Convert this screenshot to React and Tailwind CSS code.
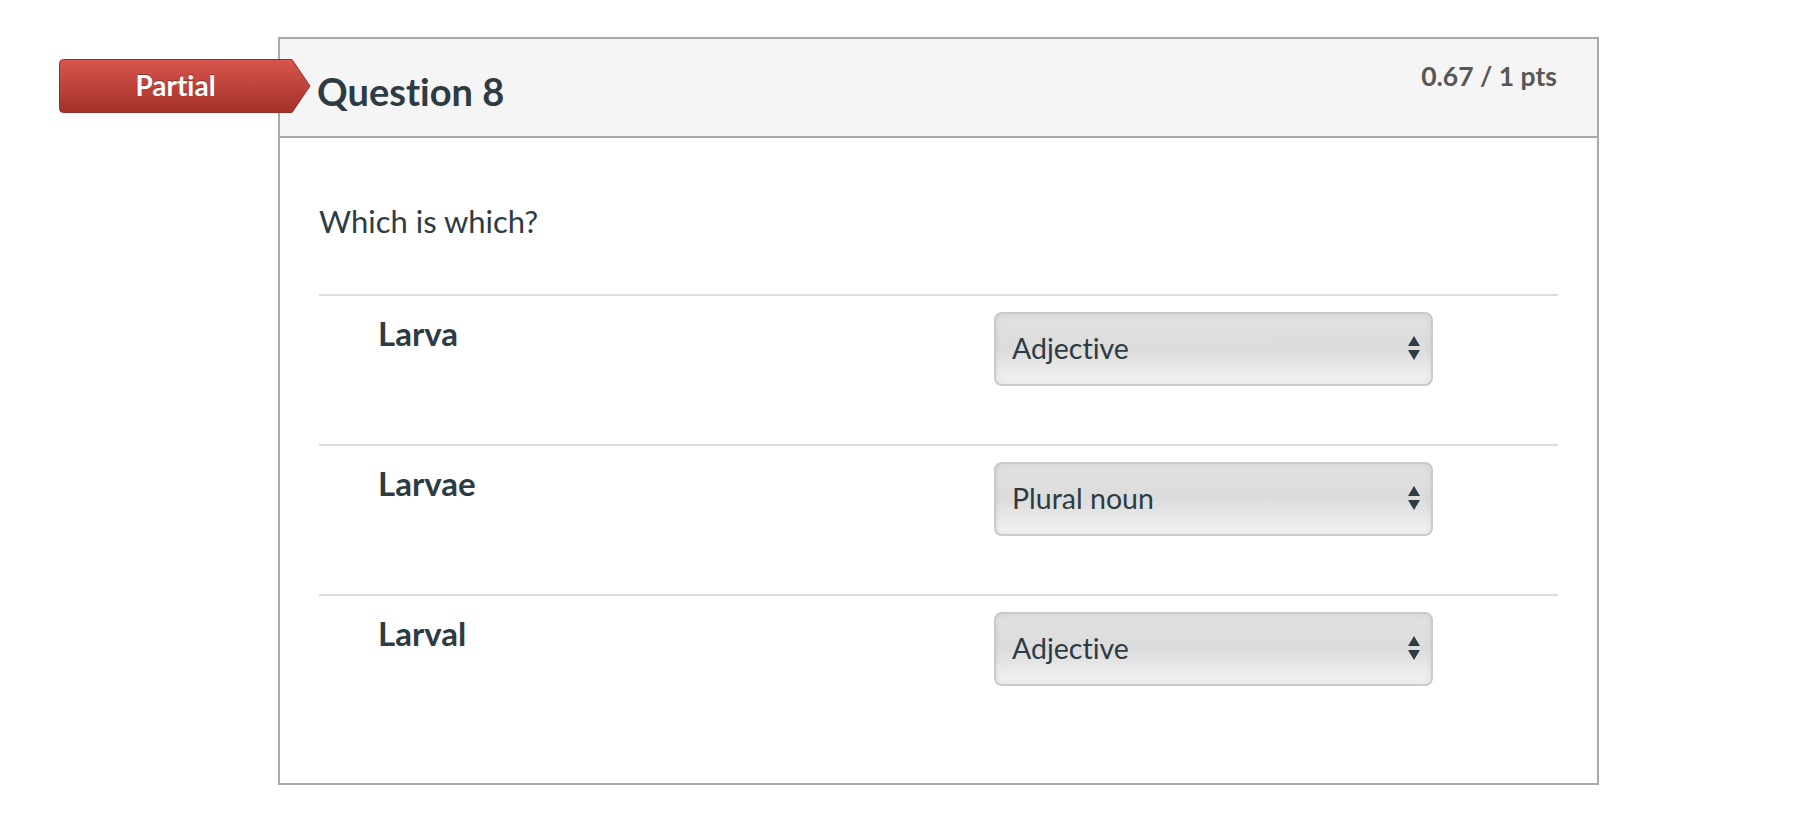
import React from 'react';

const rows = [
  { term: 'Larva', answer: 'Adjective' },
  { term: 'Larvae', answer: 'Plural noun' },
  { term: 'Larval', answer: 'Adjective' },
];

const Badge = () => (
  <div className="absolute left-[-221px] top-[20px] w-[252px] h-[54px]">
    <svg width="252" height="54" viewBox="0 0 252 54" className="absolute inset-0">
      <defs>
        <linearGradient id="badgeFill" x1="0" y1="0" x2="0" y2="1">
          <stop offset="0%" stopColor="#d8564e" />
          <stop offset="100%" stopColor="#a3302a" />
        </linearGradient>
      </defs>
      <path
        d="M4.5 0.5 H233 L251 27 L233 53.5 H4.5 Q0.5 53.5 0.5 49.5 V4.5 Q0.5 0.5 4.5 0.5 Z"
        fill="url(#badgeFill)"
        stroke="#94302a"
        strokeWidth="1"
      />
    </svg>
    <span className="absolute left-0 top-0 w-[233px] h-[54px] flex items-center justify-center text-white font-bold text-[28px] leading-none pb-[3px] [text-shadow:0_-1px_0_rgba(0,0,0,0.35)]">
      Partial
    </span>
  </div>
);

const SelectBox = ({ value }) => (
  <div className="w-[439px] h-[74px] rounded-[8px] border-2 border-[#cacaca] bg-gradient-to-b from-[#e1e1e1] via-[#dcdcdc] to-[#f3f3f3] shadow-[inset_0_0_6px_rgba(0,0,0,0.08)] flex items-center justify-between pl-[16px] pr-[11px] pb-[2px]">
    <span className="text-[28.5px] leading-none text-[#2d3b45]">{value}</span>
    <svg width="12" height="24" viewBox="0 0 12 24">
      <path d="M6 0 L12 10 H0 Z" fill="#2d3b45" />
      <path d="M0 14 H12 L6 24 Z" fill="#2d3b45" />
    </svg>
  </div>
);

const App = () => {
  return (
    <div className="w-[1808px] h-[820px] bg-white font-[Lato,sans-serif] [font-variant-ligatures:none] pt-[37px] pl-[278px]">
      <div className="relative w-[1321px] h-[748px] border-2 border-[#a9a9a9] bg-white">
        <Badge />
        <div className="h-[99px] bg-[#f5f5f5] border-b-2 border-[#a9a9a9] flex justify-between items-start pl-[37px] pr-[40px]">
          <h2 className="mt-[33px] text-[38px] leading-none font-bold text-[#2d3b45]">Question 8</h2>
          <div className="mt-[24px] text-[26.5px] leading-none font-bold text-[#575757]">0.67 / 1 pts</div>
        </div>
        <div className="px-[39px]">
          <p className="mt-[68px] text-[31px] leading-none text-[#2d3b45]">Which is which?</p>
          <div className="mt-[57px]">
            {rows.map((row, i) => (
              <div key={i} className="h-[150px] border-t-2 border-[#dcdcdc] flex items-start">
                <div className="w-[675px] pl-[59px] pt-[21px] text-[33px] leading-none font-bold text-[#2d3b45]">
                  {row.term}
                </div>
                <div className="pt-[16px]">
                  <SelectBox value={row.answer} />
                </div>
              </div>
            ))}
          </div>
        </div>
      </div>
    </div>
  );
};

export default App;
